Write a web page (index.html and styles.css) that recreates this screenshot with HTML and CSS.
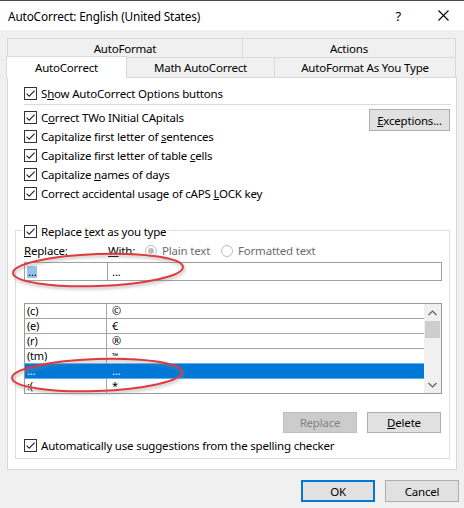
FILE: index.html
```html
<!DOCTYPE html>
<html>
<head>
<meta charset="utf-8">
<link rel="stylesheet" href="styles.css">
</head>
<body>
<div class="window">
  <div class="titlebar">
    <span class="title">AutoCorrect: English (United States)</span>
    <span class="help">?</span>
    <span class="close"><svg width="11" height="11" viewBox="0 0 11 11"><path d="M0.5 0.5 L10.5 10.5 M10.5 0.5 L0.5 10.5" stroke="#000" stroke-width="1.1" fill="none"/></svg></span>
  </div>
  <div class="body">
    <div class="tabs">
      <div class="tabrow top">
        <div class="tab t-autoformat">AutoFormat</div>
        <div class="tab t-actions">Actions</div>
      </div>
      <div class="tabrow bottom">
        <div class="tab active">AutoCorrect</div>
        <div class="tab t-math">Math AutoCorrect</div>
        <div class="tab t-afayt">AutoFormat As You Type</div>
      </div>
    </div>
    <div class="panel">
      <div class="row first"><span class="cb"><svg width="13" height="13" viewBox="0 0 13 13"><rect x="0.5" y="0.5" width="12" height="12" fill="#fff" stroke="#333"/><path d="M2.6 6.6 L5.2 9.2 L10.6 3.6" stroke="#222" stroke-width="1.1" fill="none"/></svg></span><span>S<u>h</u>ow AutoCorrect Options buttons</span></div>
      <div class="sep"></div>
      <div class="opts">
        <div class="optlist">
          <div class="row"><span class="cb"><svg width="13" height="13" viewBox="0 0 13 13"><rect x="0.5" y="0.5" width="12" height="12" fill="#fff" stroke="#333"/><path d="M2.6 6.6 L5.2 9.2 L10.6 3.6" stroke="#222" stroke-width="1.1" fill="none"/></svg></span><span>C<u>o</u>rrect TWo INitial CApitals</span></div>
          <div class="row"><span class="cb"><svg width="13" height="13" viewBox="0 0 13 13"><rect x="0.5" y="0.5" width="12" height="12" fill="#fff" stroke="#333"/><path d="M2.6 6.6 L5.2 9.2 L10.6 3.6" stroke="#222" stroke-width="1.1" fill="none"/></svg></span><span>Capitalize first letter of <u>s</u>entences</span></div>
          <div class="row"><span class="cb"><svg width="13" height="13" viewBox="0 0 13 13"><rect x="0.5" y="0.5" width="12" height="12" fill="#fff" stroke="#333"/><path d="M2.6 6.6 L5.2 9.2 L10.6 3.6" stroke="#222" stroke-width="1.1" fill="none"/></svg></span><span>Capitalize first letter of table <u>c</u>ells</span></div>
          <div class="row"><span class="cb"><svg width="13" height="13" viewBox="0 0 13 13"><rect x="0.5" y="0.5" width="12" height="12" fill="#fff" stroke="#333"/><path d="M2.6 6.6 L5.2 9.2 L10.6 3.6" stroke="#222" stroke-width="1.1" fill="none"/></svg></span><span>Capitalize <u>n</u>ames of days</span></div>
          <div class="row"><span class="cb"><svg width="13" height="13" viewBox="0 0 13 13"><rect x="0.5" y="0.5" width="12" height="12" fill="#fff" stroke="#333"/><path d="M2.6 6.6 L5.2 9.2 L10.6 3.6" stroke="#222" stroke-width="1.1" fill="none"/></svg></span><span>Correct accidental usage of cAPS <u>L</u>OCK key</span></div>
        </div>
        <div class="btn exc"><u>E</u>xceptions...</div>
      </div>
      <div class="group">
        <div class="row legend"><span class="cb"><svg width="13" height="13" viewBox="0 0 13 13"><rect x="0.5" y="0.5" width="12" height="12" fill="#fff" stroke="#333"/><path d="M2.6 6.6 L5.2 9.2 L10.6 3.6" stroke="#222" stroke-width="1.1" fill="none"/></svg></span><span>Replace <u>t</u>ext as you type</span></div>
        <div class="labels">
          <span class="lbl-replace"><u>R</u>eplace:</span>
          <span class="lbl-with"><u>W</u>ith:</span>
          <span class="radio-opt plain"><svg width="12" height="12" viewBox="0 0 12 12"><circle cx="6" cy="6" r="5.5" fill="#fff" stroke="#bcbcbc"/><circle cx="6" cy="6" r="3" fill="#bcbcbc"/></svg><span>Plain text</span></span>
          <span class="radio-opt"><svg width="12" height="12" viewBox="0 0 12 12"><circle cx="6" cy="6" r="5.5" fill="#fff" stroke="#bcbcbc"/></svg><span>Formatted text</span></span>
        </div>
        <div class="inputs">
          <div class="input in-left"><span class="sel">...</span></div>
          <div class="input in-right">...</div>
        </div>
        <div class="list">
          <div class="rows">
            <div class="lrow"><span class="c1">(c)</span><span class="c2">©</span></div>
            <div class="lrow"><span class="c1">(e)</span><span class="c2">€</span></div>
            <div class="lrow"><span class="c1">(r)</span><span class="c2">®</span></div>
            <div class="lrow"><span class="c1">(tm)</span><span class="c2 tm">™</span></div>
            <div class="lrow selected"><span class="c1">...</span><span class="c2">…</span></div>
            <div class="lrow"><span class="c1">:(</span><span class="c2">*</span></div>
          </div>
          <div class="scrollbar">
            <div class="arrow"><svg width="9" height="6" viewBox="0 0 9 6"><path d="M0.5 5 L4.5 1 L8.5 5" stroke="#606060" stroke-width="1.2" fill="none"/></svg></div>
            <div class="thumb"></div>
            <div class="track"></div>
            <div class="arrow"><svg width="9" height="6" viewBox="0 0 9 6"><path d="M0.5 1 L4.5 5 L8.5 1" stroke="#606060" stroke-width="1.2" fill="none"/></svg></div>
          </div>
        </div>
        <div class="listbtns">
          <div class="btn disabled">Replace</div>
          <div class="btn"><u>D</u>elete</div>
        </div>
        <div class="row last"><span class="cb"><svg width="13" height="13" viewBox="0 0 13 13"><rect x="0.5" y="0.5" width="12" height="12" fill="#fff" stroke="#333"/><path d="M2.6 6.6 L5.2 9.2 L10.6 3.6" stroke="#222" stroke-width="1.1" fill="none"/></svg></span><span>Automatically use su<u>g</u>gestions from the spelling checker</span></div>
      </div>
    </div>
    <div class="footer">
      <div class="btn ok">OK</div>
      <div class="btn">Cancel</div>
    </div>
  </div>
  <svg class="marks" width="464" height="508" viewBox="0 0 464 508">
    <defs>
      <filter id="sh" x="-10%" y="-30%" width="120%" height="160%">
        <feGaussianBlur stdDeviation="1.5"/>
      </filter>
    </defs>
    <g transform="rotate(-2 98 270)">
      <ellipse cx="99" cy="272" rx="85" ry="16" fill="none" stroke="#888" stroke-opacity="0.5" stroke-width="2.5" filter="url(#sh)"/>
      <ellipse cx="98" cy="270" rx="85" ry="16" fill="none" stroke="#e0393e" stroke-width="2"/>
    </g>
    <g transform="rotate(-2 97 374)">
      <ellipse cx="98" cy="377" rx="85" ry="16" fill="none" stroke="#888" stroke-opacity="0.5" stroke-width="2.5" filter="url(#sh)"/>
      <ellipse cx="97" cy="375" rx="85" ry="16" fill="none" stroke="#e0393e" stroke-width="2"/>
    </g>
  </svg>
</div>
</body>
</html>
```
FILE: styles.css
```css
* { box-sizing: border-box; }
html, body { margin: 0; padding: 0; }
body {
  width: 464px;
  height: 508px;
  overflow: hidden;
  font-family: "Noto Sans", "Open Sans", sans-serif;
  font-size: 11.5px;
  letter-spacing: -0.2px;
  color: #000;
  background: #f0f0f0;
}
u { text-decoration: underline; text-underline-offset: 1px; }
.window { position: relative; width: 464px; height: 508px; }

.titlebar {
  height: 30px;
  background: #fff;
  border-top: 1px solid #4a4a4a;
  display: flex;
  align-items: center;
  padding-left: 8px;
  position: relative;
}
.title { font-size: 11.8px; letter-spacing: -0.15px; }
.help { margin-left: auto; margin-right: 37px; font-size: 13px; }
.close { width: 11px; height: 11px; margin-right: 15px; display: flex; }

.body { padding-top: 8px; }

.tabrow { display: flex; }
.tabrow.top { margin-left: 7px; height: 19px; }
.tabrow.bottom { margin-left: 6px; height: 20px; align-items: flex-start; }
.tab {
  border: 1px solid #d9d9d9;
  border-bottom: none;
  display: flex;
  align-items: center;
  justify-content: center;
  background: #f0f0f0;
}
.t-autoformat { width: 236px; height: 19px; }
.t-actions { width: 213px; height: 19px; border-left: none; }
.tabrow.bottom .tab { height: 20px; }
.tab.active {
  width: 121px;
  height: 22px !important;
  margin-top: -1px;
  background: #fff;
  position: relative;
  z-index: 2;
  padding-bottom: 1px;
}
.t-math { width: 148px; border-left: none; }
.t-afayt { width: 181px; border-left: none; }

.panel {
  margin-left: 7px;
  width: 450px;
  height: 393px;
  background: #fff;
  border: 1px solid #d9d9d9;
  padding-top: 6px;
  position: relative;
  z-index: 1;
}

.row { display: flex; align-items: center; height: 19px; gap: 4px; white-space: nowrap; }
.cb { width: 13px; height: 13px; display: flex; flex: none; }
.panel > .row { margin-left: 16px; }
.sep { margin: 1px 5px 0 16px; height: 1px; background: #dadada; }
.opts { display: flex; justify-content: space-between; margin: 3px 6px 0 16px; }

.btn {
  display: flex;
  align-items: center;
  justify-content: center;
  background: #e1e1e1;
  border: 1px solid #adadad;
  height: 22px;
  width: 74px;
}
.btn.exc { width: 81px; margin-top: 1px; }
.btn.disabled { background: #cccccc; border-color: #bfbfbf; color: #838383; }

.group {
  margin: 27px 0 0 7px;
  width: 435px;
  border: 1px solid #dcdcdc;
  padding: 0 7px 3px 8px;
}
.legend {
  margin-top: -9px;
  margin-left: -2px;
  padding: 0 3px 0 2px;
  width: fit-content;
  background: #fff;
}
.labels { display: flex; align-items: center; height: 19px; white-space: nowrap; }
.lbl-replace { width: 84px; }
.lbl-with { width: 37px; }
.radio-opt { display: flex; align-items: center; gap: 5px; color: #6d6d6d; }
.radio-opt svg { flex: none; }
.radio-opt.plain { width: 76px; }

.inputs { display: flex; margin-top: 2px; height: 19px; }
.input {
  height: 19px;
  border: 1px solid #a0a0a0;
  background: #fff;
  display: flex;
  align-items: center;
  padding-left: 2px;
}
.in-left { width: 84px; }
.in-right { width: 335px; margin-left: -1px; padding-left: 4px; }
.sel { background: #99c2ea; padding: 0 0 0 1px; line-height: 12px; }

.list {
  margin-top: 22px;
  height: 91px;
  border: 1px solid #9a9a9a;
  display: flex;
  background: #fff;
  overflow: hidden;
}
.rows { flex: 1; overflow: hidden; }
.lrow {
  display: flex;
  height: 15px;
  border-bottom: 1px solid #a5a5a5;
  font-size: 11px;
  line-height: 14px;
}
.c1 { width: 82px; flex: none; border-right: 1px solid #a5a5a5; padding-left: 2px; }
.c2 { padding-left: 5px; }
.tm { font-size: 8px; }
.lrow.selected {
  background: #0078d7;
  color: #fff;
  border-top: 1px solid #5fb2f0;
  border-bottom: 1px solid #5fb2f0;
  margin-top: -1px;
  height: 16px;
}
.lrow.selected .c1 { border-right-color: #0078d7; }
.scrollbar {
  width: 17px;
  flex: none;
  background: #f0f0f0;
  display: flex;
  flex-direction: column;
}
.arrow { height: 17px; display: flex; align-items: center; justify-content: center; flex: none; }
.thumb { height: 17px; margin: 0 1px; background: #cdcdcd; flex: none; }
.track { flex: 1; }

.listbtns { display: flex; justify-content: flex-end; gap: 10px; margin: 18px 1px 0 0; }
.listbtns .btn { height: 21px; }
.row.last { margin-top: 3px; }

.footer { display: flex; justify-content: flex-end; gap: 10px; margin-top: 10px; padding-right: 5px; }
.btn.ok { border: 2px solid #0078d7; }

.marks { position: absolute; left: 0; top: 0; pointer-events: none; z-index: 10; }
```
